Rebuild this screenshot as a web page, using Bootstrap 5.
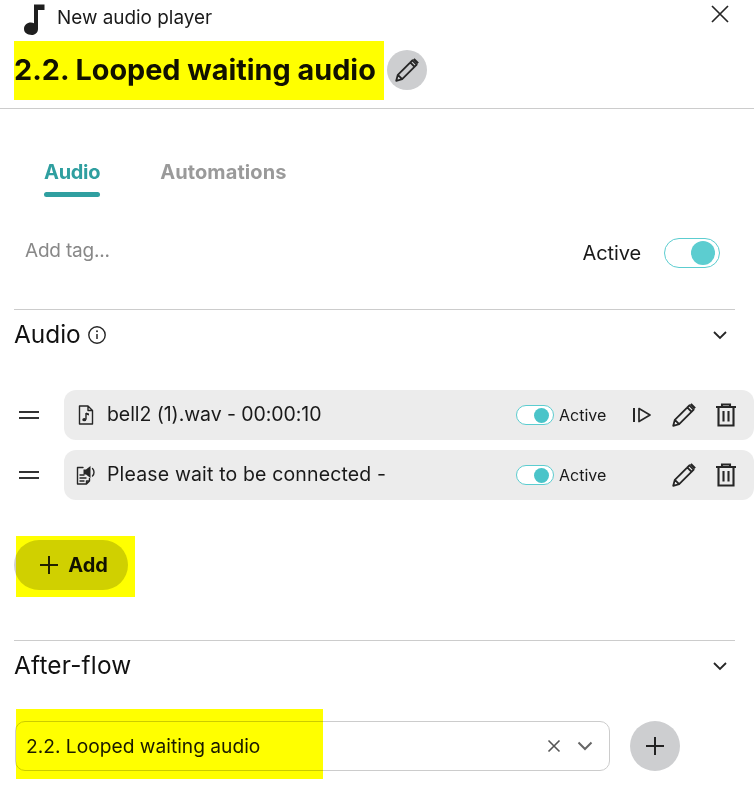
<!DOCTYPE html>
<html lang="en">
<head>
<meta charset="utf-8">
<title>New audio player</title>
<link href="https://cdn.jsdelivr.net/npm/bootstrap@5.3.0/dist/css/bootstrap.min.css" rel="stylesheet">
<style>
html,body{height:788px;overflow:hidden;background:#fff}
body{font-family:Inter,"Liberation Sans",sans-serif;color:#1a1a1a;position:relative;width:754px}
.ink{stroke:#262626;fill:none;stroke-width:1.7;stroke-linecap:round;stroke-linejoin:round}
.ink-thin{stroke-width:1.4}
.ink-bold{stroke-width:2.1;stroke-linecap:butt;stroke-linejoin:miter}
.hdr{height:36px;padding-left:22px;gap:11px}
.hdr-label{font-size:18.9px;padding-top:1px}
.close-x{position:absolute;right:24px;top:4px;width:20px;height:20px}
.title-row{height:73px;padding:0 0 3px 14px;gap:11px;border-bottom:1px solid #ccc}
.title-txt{font-size:28.8px;font-weight:700;margin:0;color:#111}
.round-btn{width:40px;height:40px;border-radius:50%;background:#cdced0;border:0;padding:0}
.title-row .round-btn{margin-bottom:2px}
.tabset{padding:49px 0 0 44px;gap:60px}
.tab-item{font-size:20px;font-weight:700;height:38px;color:#9a9a9a;line-height:28px;letter-spacing:.1px}
.tab-on{color:#2f9fa0;position:relative;letter-spacing:-.3px}
.tab-on::after{content:"";position:absolute;left:0;right:0;bottom:-1px;height:5px;border-radius:3px;background:#2f9fa0}
.tag-row{height:113px;padding:41px 34px 0 25px;align-items:flex-start}
.tag-ph{font-size:19px;color:#888;letter-spacing:-.2px;line-height:28px}
.act-big{font-size:20px;line-height:30px;letter-spacing:-.1px;padding-top:1px}
.tgl{display:inline-flex;align-items:center;justify-content:flex-end;border:1px solid #5ccdd0;border-radius:99px;background:#fff}
.tgl-lg{width:56px;height:30px;padding-right:4px;margin-left:23px}
.tgl-lg i{display:block;width:24px;height:24px;border-radius:50%;background:#5ccdd0}
.tgl-sm{width:38px;height:20px;padding-right:4px}
.tgl-sm i{display:block;width:15px;height:15px;border-radius:50%;background:#4ac4c9}
.sect{margin:0 19px 0 14px;border-top:1px solid #ccc}
.sect-head{height:50px}
.sect-title{font-size:24.4px;margin:0;font-weight:400;color:#111}
.sect-gap{gap:6px}
.wide-ls{letter-spacing:.2px}
.chev{width:16px;height:10px;margin-right:7px}
.rows{padding:30px 0 0 0;gap:10px;margin-left:19px}
.row-line{height:50px}
.grip{width:20px;margin-right:25px;gap:4px}
.grip i{display:block;height:2px;background:#333}
.pill{flex:1;height:50px;background:#ececec;border-radius:12px;min-width:0;padding-right:7px}
.pill-ic{width:43px;flex:none}
.pill-txt{font-size:19.5px;letter-spacing:-.07px;flex:1;color:#1a1a1a}
.pill-wide{letter-spacing:.15px}
.act-sm{font-size:16px;margin-left:5px;width:62px;margin-top:-1px}
.ic-slot{width:42px;flex:none;text-align:center;line-height:0}
.add-wrap{padding:40px 0 50px 14px}
.add-btn{width:114px;height:50px;background:#d0d0d0;border:0;border-radius:25px;font-size:20px;font-weight:700;gap:9px;color:#111;padding:0 0 0 5px}
.sel-row{padding:30px 0 0 15px;margin-left:-14px}
.sel-box{width:595px;height:50px;border:1px solid #ccc;border-radius:10px;padding:0 16px 0 10px}
.sel-txt{font-size:19.2px;flex:1;color:#1a1a1a}
.big-add{width:50px;height:50px;margin-left:20px}
.mark-y{position:absolute;background:#ff0;mix-blend-mode:multiply;pointer-events:none}
.my1{left:14px;top:41px;width:370px;height:59px}
.my2{left:16px;top:536px;width:119px;height:61px}
.my3{left:16px;top:709px;width:307px;height:70px}
</style>
</head>
<body>
<header class="d-flex align-items-center hdr">
  <svg width="24" height="33" viewBox="0 0 24 33"><path fill="#1f1f1f" d="M12 2.500h10.500v5.500H16V27c0 3.500-2.800 6-6.200 6C5.300 33 2 30.800 2 26.800 2 23 5.200 20.500 8.800 20.500c1.300 0 2.400.2 3.200.7z"/></svg>
  <span class="hdr-label">New audio player</span>
</header>
<svg class="close-x" viewBox="0 0 20 20"><path d="M2 2 18 18M18 2 2 18" stroke="#262626" stroke-width="1.7" fill="none"/></svg>
<div class="d-flex align-items-center title-row">
  <h1 class="title-txt">2.2. Looped waiting audio</h1>
  <button class="round-btn d-flex align-items-center justify-content-center" aria-label="Edit">
    <svg width="28" height="28" viewBox="0 0 26 26"><path class="ink" d="M3 23l1.500-5.500L18 4l4 4L8.500 21.500zM4.500 17.500l4 4M16 6l4 4"/><path d="M20 2l4 4-1.500 1.500-4-4z" fill="#262626"/></svg>
  </button>
</div>
<nav class="d-flex tabset">
  <div class="tab-item tab-on">Audio</div>
  <div class="tab-item">Automations</div>
</nav>
<div class="d-flex justify-content-between tag-row">
  <span class="tag-ph">Add tag...</span>
  <div class="d-flex align-items-center"><span class="act-big">Active</span><span class="tgl tgl-lg"><i></i></span></div>
</div>
<section class="sect">
  <div class="d-flex align-items-center justify-content-between sect-head">
    <div class="d-flex align-items-center sect-gap">
      <h2 class="sect-title">Audio</h2>
      <svg width="20" height="20" viewBox="0 0 20 20"><circle class="ink ink-thin" cx="10" cy="10" r="8.200"/><path d="M10 9v5" stroke="#262626" stroke-width="1.500"/><circle cx="10" cy="6.300" r="1" fill="#262626"/></svg>
    </div>
    <svg class="chev" viewBox="0 0 16 10"><path d="M2 2l6 6 6-6" stroke="#262626" stroke-width="1.800" fill="none"/></svg>
  </div>
</section>
<div class="d-flex flex-column rows">
  <div class="d-flex align-items-center row-line">
    <div class="d-flex flex-column grip"><i></i><i></i></div>
    <div class="d-flex align-items-center pill">
      <div class="d-flex justify-content-center pill-ic">
        <svg width="16" height="20" viewBox="0 0 16 20"><path class="ink ink-thin" d="M1.500 1h8.500l4.500 4.500V19h-13zM10 1v4.500h4.500"/><path d="M8 8v6.500" stroke="#262626" stroke-width="1.400"/><path d="M8 7.500l3 1v2l-3-1z" fill="#262626"/><ellipse cx="6.300" cy="14.700" rx="2" ry="1.600" fill="#262626"/></svg>
      </div>
      <span class="pill-txt">bell2 (1).wav - 00:00:10</span>
      <span class="tgl tgl-sm"><i></i></span><span class="act-sm">Active</span>
      <div class="ic-slot"><svg width="20" height="18" viewBox="0 0 20 18"><path d="M2 2v14" stroke="#262626" stroke-width="2"/><path class="ink" d="M7 2.500 18 9 7 15.500z"/></svg></div>
      <div class="ic-slot"><svg width="28" height="28" viewBox="0 0 26 26"><path class="ink" d="M3 23l1.500-5.500L18 4l4 4L8.500 21.500zM4.500 17.500l4 4M16 6l4 4"/><path d="M20 2l4 4-1.500 1.500-4-4z" fill="#262626"/></svg></div>
      <div class="ic-slot"><svg width="22" height="24" viewBox="0 0 22 24"><path class="ink ink-bold" d="M1 4h20M7 4V1.500h8V4M3.500 4v18.500h15V4M8.500 8v10.500M13.500 8v10.500"/></svg></div>
    </div>
  </div>
  <div class="d-flex align-items-center row-line">
    <div class="d-flex flex-column grip"><i></i><i></i></div>
    <div class="d-flex align-items-center pill">
      <div class="d-flex justify-content-center pill-ic">
        <svg width="20" height="20" viewBox="0 0 20 20"><path class="ink ink-thin" d="M7 2.500H1.500V19h9l3-3v-2.500M10.500 19v-3h3M4 10h4M4 13h6M4 16h4"/><path d="M7.500 4.500H10L14.500 1v12L10 9.500H7.500z" fill="#262626"/><path class="ink ink-thin" d="M16.500 3.500c2 2 2 5.500 0 7.500"/></svg>
      </div>
      <span class="pill-txt pill-wide">Please wait to be connected -</span>
      <span class="tgl tgl-sm"><i></i></span><span class="act-sm">Active</span>
      <div class="ic-slot"></div>
      <div class="ic-slot"><svg width="28" height="28" viewBox="0 0 26 26"><path class="ink" d="M3 23l1.500-5.500L18 4l4 4L8.500 21.500zM4.500 17.500l4 4M16 6l4 4"/><path d="M20 2l4 4-1.500 1.500-4-4z" fill="#262626"/></svg></div>
      <div class="ic-slot"><svg width="22" height="24" viewBox="0 0 22 24"><path class="ink ink-bold" d="M1 4h20M7 4V1.500h8V4M3.500 4v18.500h15V4M8.500 8v10.500M13.500 8v10.500"/></svg></div>
    </div>
  </div>
</div>
<div class="add-wrap">
  <button class="d-flex align-items-center justify-content-center add-btn">
    <svg width="20" height="20" viewBox="0 0 20 20"><path d="M10 1v18M1 10h18" stroke="#222" stroke-width="2"/></svg>
    <span>Add</span>
  </button>
</div>
<section class="sect">
  <div class="d-flex align-items-center justify-content-between sect-head">
    <h2 class="sect-title wide-ls">After-flow</h2>
    <svg class="chev" viewBox="0 0 16 10"><path d="M2 2l6 6 6-6" stroke="#262626" stroke-width="1.800" fill="none"/></svg>
  </div>
  <div class="d-flex align-items-center sel-row">
    <div class="d-flex align-items-center sel-box">
      <span class="sel-txt">2.2. Looped waiting audio</span>
      <svg width="14" height="14" viewBox="0 0 14 14"><path d="M1.500 1.500l11 11M12.500 1.500l-11 11" stroke="#555" stroke-width="1.600"/></svg>
      <svg class="ms-3" width="16" height="10" viewBox="0 0 16 10"><path d="M1.500 1.500 8 8l6.500-6.500" stroke="#666" stroke-width="2" fill="none"/></svg>
    </div>
    <button class="round-btn d-flex align-items-center justify-content-center big-add" aria-label="Add">
      <svg width="20" height="20" viewBox="0 0 20 20"><path d="M10 1v18M1 10h18" stroke="#222" stroke-width="2"/></svg>
    </button>
  </div>
</section>
<div class="mark-y my1"></div>
<div class="mark-y my2"></div>
<div class="mark-y my3"></div>
</body>
</html>
